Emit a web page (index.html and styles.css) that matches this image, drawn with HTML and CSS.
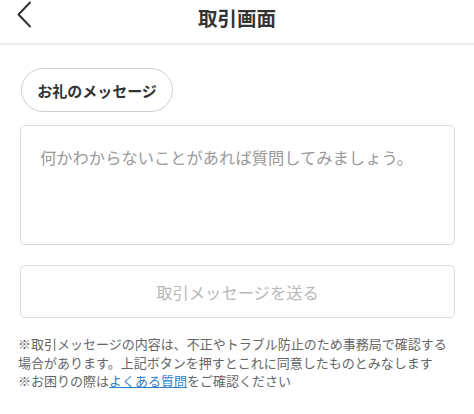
FILE: index.html
```html
<!DOCTYPE html>
<html lang="ja">
<head>
<meta charset="utf-8">
<title>取引画面</title>
<link rel="stylesheet" href="styles.css">
</head>
<body>
<header class="header">
  <button class="back" aria-label="戻る">
    <svg width="16" height="27" viewBox="0 0 16 27"><path d="M14 1.5 L2.5 13.5 L14 25.5" fill="none" stroke="#333" stroke-width="2" stroke-linecap="round" stroke-linejoin="round"/></svg>
  </button>
  <h1 class="title">取引画面</h1>
</header>
<main class="content">
  <button class="pill">お礼のメッセージ</button>
  <div class="textarea">何かわからないことがあれば質問してみましょう。</div>
  <button class="send">取引メッセージを送る</button>
  <p class="notes">※取引メッセージの内容は、不正やトラブル防止のため事務局で確認する<br>場合があります。上記ボタンを押すとこれに同意したものとみなします<br>※お困りの際は<a class="link" href="#">よくある質問</a>をご確認ください</p>
</main>
</body>
</html>
```

FILE: styles.css
```css
* { box-sizing: border-box; }
html, body { margin: 0; padding: 0; background: #fff; }
body {
  font-family: "Noto Sans CJK JP", "Noto Sans", sans-serif;
  color: #333;
  width: 474px;
}
.header {
  height: 45px;
  border-bottom: 2px solid #ececec;
  display: flex;
  align-items: center;
  justify-content: center;
  position: relative;
}
.back {
  position: absolute;
  left: 16px;
  top: 1px;
  padding: 0;
  border: 0;
  background: none;
  display: flex;
}
.title {
  margin: 0;
  font-size: 19.5px;
  font-weight: 700;
  color: #333;
  line-height: 1;
  position: relative;
  top: -4px;
}
.content {
  padding: 23px 19px 0 20px;
  display: flex;
  flex-direction: column;
  align-items: flex-start;
}
.pill {
  margin-left: 1px;
  width: 152px;
  height: 44px;
  border: 1.5px solid #cfcfcf;
  border-radius: 22px;
  background: #fff;
  font-family: inherit;
  font-size: 15px;
  font-weight: 700;
  color: #333;
  padding: 0;
  letter-spacing: 0;
}
.textarea {
  margin-top: 13px;
  width: 100%;
  height: 120px;
  border: 1.5px solid #dcdcdc;
  border-radius: 5px;
  padding: 20px 19px;
  font-size: 16.3px;
  line-height: 22px;
  color: #9a9a9a;
}
.send {
  margin-top: 20px;
  width: 100%;
  height: 53px;
  border: 1.5px solid #dcdcdc;
  border-radius: 5px;
  background: #fff;
  font-family: inherit;
  font-size: 16.3px;
  color: #b8b8b8;
  padding: 0;
}
.notes {
  margin: 17px 0 0 -2px;
  font-size: 13px;
  line-height: 18.5px;
  color: #666;
  white-space: nowrap;
}
.link {
  color: #2f7fc8;
  text-decoration: underline;
}
```
